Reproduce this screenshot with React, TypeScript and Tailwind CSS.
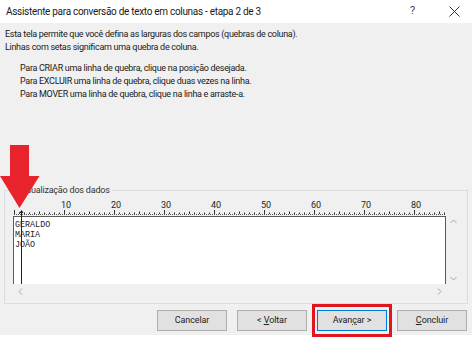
import React from "react";

const UI = { fontFamily: 'Roboto, "Noto Sans", sans-serif' };
const MONO = { fontFamily: '"Liberation Mono", "DejaVu Sans Mono", monospace' };

const ROWS = ["GERALDO", "MARIA", "JOÃO"];

// ruler: col 0 at x=2 inside the svg, 5px per column
function Ruler() {
  const ticks = [];
  for (let c = 0; c <= 86; c++) {
    const x = 2 + c * 5 + 0.5;
    const h = c % 10 === 0 ? 4 : c % 5 === 0 ? 2.5 : 1.5;
    ticks.push(<line key={c} x1={x} x2={x} y1={16 - h} y2={16} stroke="#333" strokeWidth={1} />);
  }
  const labels = [10, 20, 30, 40, 50, 60, 70, 80];
  return (
    <svg width="440" height="18" className="block">
      <line x1="2" x2="433" y1="16.5" y2="16.5" stroke="#555" strokeWidth={1} strokeDasharray="1 1" />
      {ticks}
      {labels.map((n) => (
        <text key={n} x={2 + n * 5 + 2} y={10} fontSize="9" textAnchor="middle" fill="#222" style={UI}>
          {n}
        </text>
      ))}
    </svg>
  );
}

function Button({ label, focused }: { label: React.ReactNode; focused?: boolean }) {
  return (
    <button
      className={`block w-[70px] h-[21px] text-[9px] tracking-[-0.1px] leading-[19px] text-center text-[#222] bg-[#e1e1e1] border ${
        focused ? "border-[#0078d7]" : "border-[#adadad]"
      }`}
      style={UI}
    >
      {label}
    </button>
  );
}

export default function App() {
  return (
    <div className="w-[474px] h-[338px] bg-white relative overflow-hidden text-[#1a1a1a]" style={UI}>
      {/* title bar */}
      <div className="h-[23px] flex items-center pl-[6px]">
        <span className="text-[10px] flex-1 tracking-[-0.3px]">
          Assistente para conversão de texto em colunas - etapa 2 de 3
        </span>
        <span className="text-[11px] text-[#444] w-[10px] mr-[29px]">?</span>
        <svg width="11" height="11" className="mr-[14px]" viewBox="0 0 11 11">
          <path d="M0.5 0.5 L10.5 10.5 M10.5 0.5 L0.5 10.5" stroke="#333" strokeWidth="1" />
        </svg>
      </div>

      {/* body */}
      <div className="w-[472px] h-[312px] bg-[#f0f0f0] flex flex-col pt-[5px]">
        <div className="pl-[5px] text-[9px] leading-[13px] tracking-[-0.3px]">
          <p>Esta tela permite que você defina as larguras dos campos (quebras de coluna).</p>
          <p>Linhas com setas significam uma quebra de coluna.</p>
        </div>
        <div className="pl-[20px] mt-[8px] text-[9px] leading-[13px] tracking-[-0.3px]">
          <p>Para CRIAR uma linha de quebra, clique na posição desejada.</p>
          <p>Para EXCLUIR uma linha de quebra, clique duas vezes na linha.</p>
          <p>Para MOVER uma linha de quebra, clique na linha e arraste-a.</p>
        </div>

        {/* group box */}
        <fieldset className="mt-[83px] ml-[4px] w-[464px] h-[120px] border border-[#dcdcdc] pl-[8px] pr-[6px]">
          <legend className="ml-[4px] px-[2px] text-[9px] leading-[12px] tracking-[-0.2px] text-[#333]">
            Visualização dos dados
          </legend>
          <div className="mt-[2px] -ml-[1px]">
            <Ruler />
          </div>
          <div className="relative w-[447px] h-[82px] flex flex-col">
            <div className="flex flex-1">
              <div className="flex-1 bg-white border-l border-t border-r border-[#5a5a5a] pt-[3px] pl-[1px]">
                {ROWS.map((r) => (
                  <div key={r} className="text-[8.4px] leading-[10px] text-[#222]" style={MONO}>
                    {r}
                  </div>
                ))}
              </div>
              <div className="w-[14px] flex flex-col items-center justify-between py-[3px]">
                <svg width="7" height="5" viewBox="0 0 7 5">
                  <path d="M0.5 4 L3.5 1 L6.5 4" fill="none" stroke="#a6a6a6" />
                </svg>
                <svg width="7" height="5" viewBox="0 0 7 5">
                  <path d="M0.5 1 L3.5 4 L6.5 1" fill="none" stroke="#a6a6a6" />
                </svg>
              </div>
            </div>
            <div className="h-[14px] flex items-center justify-between pl-[5px] pr-[18px]">
              <svg width="5" height="7" viewBox="0 0 5 7">
                <path d="M4 0.5 L1 3.5 L4 6.5" fill="none" stroke="#a6a6a6" />
              </svg>
              <svg width="5" height="7" viewBox="0 0 5 7">
                <path d="M1 0.5 L4 3.5 L1 6.5" fill="none" stroke="#a6a6a6" />
              </svg>
            </div>
            {/* column break line */}
            <svg className="absolute left-[6px] -top-[6px]" width="5" height="74" viewBox="0 0 5 74">
              <path d="M2.5 0 L0.5 3 L4.5 3 Z" fill="#111" />
              <line x1="2.5" x2="2.5" y1="2" y2="74" stroke="#222" strokeWidth="1" />
            </svg>
          </div>
        </fieldset>

        {/* buttons */}
        <div className="mt-[6px] flex items-start justify-end gap-[10px] pr-[5px]">
          <Button label="Cancelar" />
          <Button
            label={
              <>
                {"< "}
                <span className="underline">V</span>oltar
              </>
            }
          />
          <div className="flex -mx-[5px] -my-[6px] px-[2px] py-[3px] border-[3px] border-[#e0161e]">
            <Button
              focused
              label={
                <>
                  Avan<span className="underline">ç</span>ar &gt;
                </>
              }
            />
          </div>
          <Button
            label={
              <>
                <span className="underline">C</span>oncluir
              </>
            }
          />
        </div>
      </div>

      {/* red arrow callout */}
      <svg className="absolute left-0 top-[145px]" width="40" height="65" viewBox="0 0 40 65">
        <path d="M10 0 H29 V31 H39.5 L19.5 63 L0 31 H10 Z" fill="#e8232b" />
      </svg>
    </div>
  );
}
